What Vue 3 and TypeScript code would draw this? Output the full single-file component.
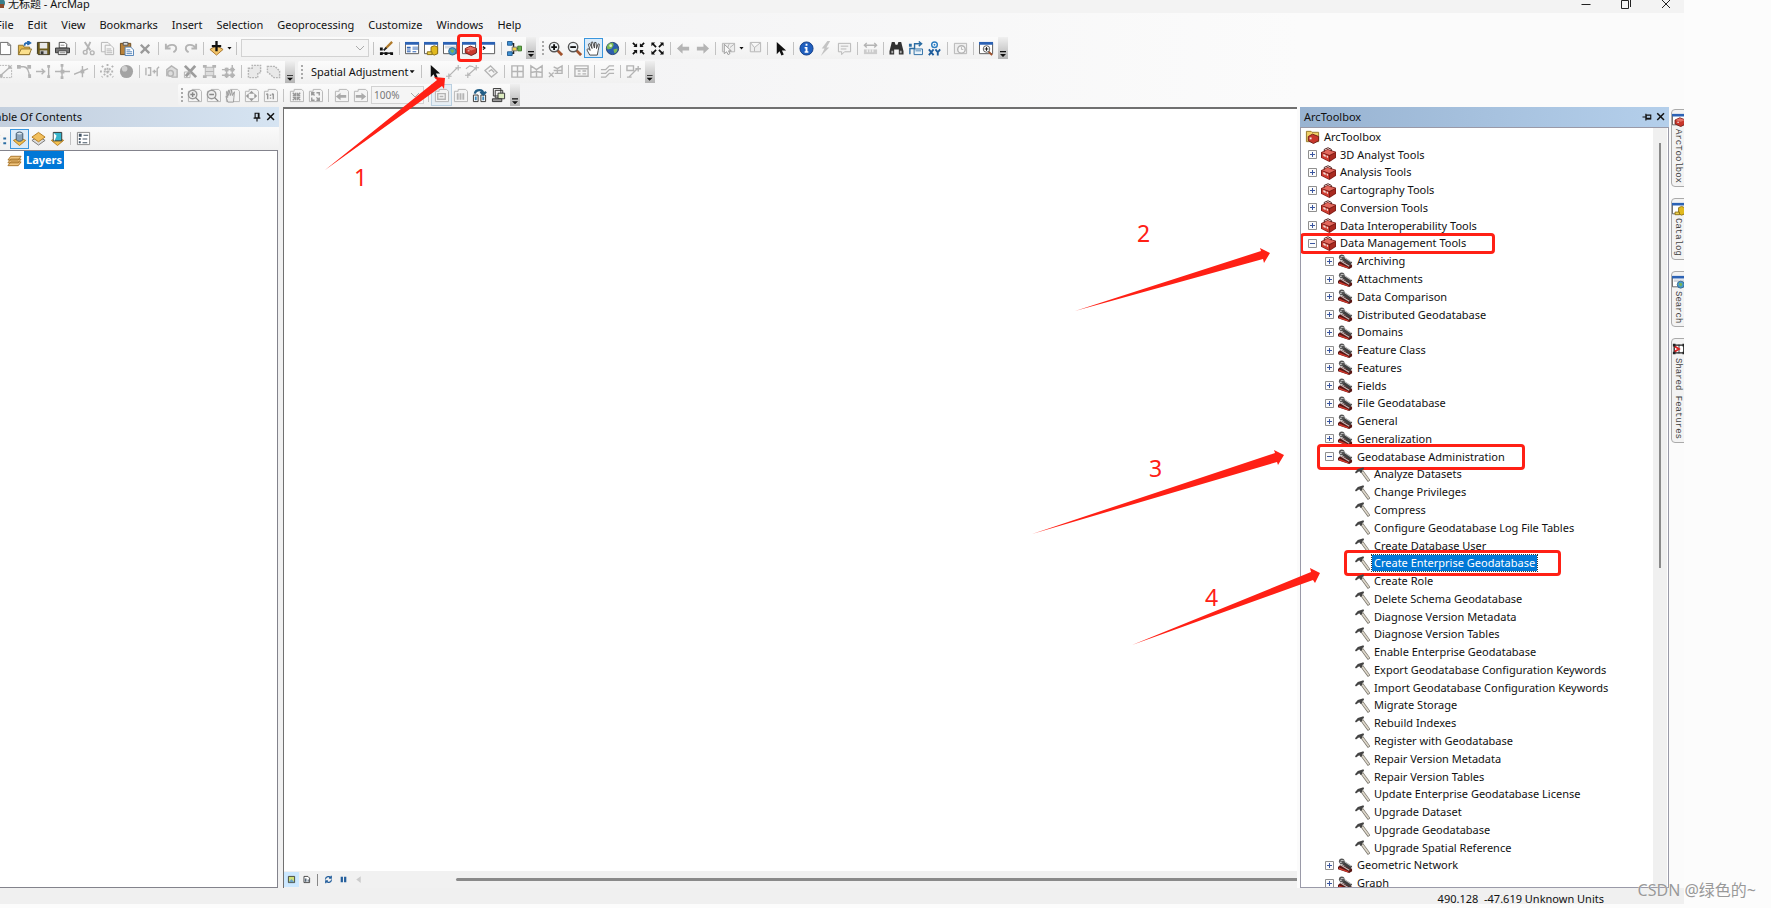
<script setup lang="ts">
import { ref } from 'vue'

interface Item {
  kind: 'icon' | 'sep' | 'caret' | 'more' | 'grip'
  name: string
  on: boolean
}
interface Row {
  level: number
  icon: string
  label: string
  open?: boolean
  mark?: string
}

const menus = ['File', 'Edit', 'View', 'Bookmarks', 'Insert', 'Selection', 'Geoprocessing', 'Customize', 'Windows', 'Help']

const G = '#b4b4b4'
const win = '<path fill="#fff" stroke="#555" d="M.5 2.5h14v11H.5z"/><path fill="#2c62b4" d="M0 1h15v3H0z"/>'
const page = `<path fill="#f4f4f4" stroke="${G}" d="M1.5 3.5h4v-2h8l2 2v11h-14z"/>`
const box = '<path fill="#7d1d17" d="M0 5.500 7 2l9 3v6.500L9 16 0 11.500z"/><path fill="#cf3d31" d="m1 6.500 7.500 3V15L1 11.200z"/><path fill="#a82a20" d="m9.500 9.500 5.700-3V11L9.500 14.700z"/><path fill="#e2685c" d="M1 5.500 7 2.800l8 2.700-6 3z"/><path fill="none" stroke="#4b1512" d="M3.500 5V2.500L7.500.8 11 2.500v2"/><path fill="#f0ded8" d="M2.500 7.500 5 8.600v2L2.500 9.500zM6 9l1.500.700v2L6 11z"/>'
const zoomGlass = (s: string) => `<path stroke="#a0522d" stroke-width="3" d="m10 10 5 5"/><circle cx="6.500" cy="6.500" r="5" fill="#eef3f6" stroke="#555" stroke-width="1.500"/><path stroke="#111" stroke-width="2" d="${s}"/>`

const icons: Record<string, string> = {
  newdoc: '<path fill="#fff" stroke="#666" d="M2.500 1.500h8l3 3v10h-11z"/><path fill="none" stroke="#666" d="M10.500 1.500v3h3"/>',
  open: '<path fill="#e3b84a" stroke="#8f722d" d="M1.500 14.500V4.500h5l1 2h6v8z"/><path fill="#fbe08d" stroke="#8f722d" d="m1.500 14.500 3-6h11l-2.500 6z"/><path fill="none" stroke="#2368b0" stroke-width="2" d="M8 5c0-3 2-3 5-3m-2-2 3 2-3 2"/>',
  save: '<path fill="#6b5a1c" stroke="#3b3420" d="M1.500 1.500h13v13h-12l-1-1z"/><path fill="#e9e9e9" d="M4 2h8v6H4z"/><path fill="#c9c9c9" d="M4 10h8v4H4z"/><path fill="#333" d="M5 11h3v3H5z"/>',
  print: '<path fill="#fff" stroke="#444" d="M4.500 1.500h6l2 2v4h-8z"/><path fill="#777" stroke="#333" d="M.5 7.500h15v5H.5z"/><path fill="#f3f3f3" stroke="#444" d="M3.500 10.500h9v4h-9z"/><path stroke="#888" d="M6 4.500h4M5 12.500h6"/>',
  cut: `<path stroke="${G}" stroke-width="2" d="m4 1 6 9M10 1 6 10"/><circle cx="4.500" cy="12" r="2" fill="none" stroke="${G}" stroke-width="1.500"/><circle cx="12" cy="12.500" r="2" fill="none" stroke="${G}" stroke-width="1.500"/>`,
  copy: `<path fill="#f6f6f6" stroke="${G}" d="M1.500 1.500h7l2 2v8h-9z"/><path fill="#f6f6f6" stroke="${G}" d="M5.500 4.500h6l3 3v7h-9z"/><path stroke="${G}" d="M7 8.500h5M7 10.500h6M7 12.500h6"/>`,
  paste: '<path fill="#b98239" stroke="#6b4a1c" d="M1.500 2.500h11v12h-11z"/><path fill="#ddd" stroke="#555" d="M4.500 1.500h5v3h-5z"/><path fill="#fff" stroke="#4e7fb5" d="M6.500 6.500h6l3 3v6h-9z"/><path stroke="#4e7fb5" d="M8 9.500h4M8 11.500h6M8 13.500h6"/>',
  del: '<path stroke="#9a9a9a" stroke-width="2.500" d="m3 4 9 9m0-9-9 9"/>',
  undo: `<path fill="none" stroke="${G}" stroke-width="2" d="M2 3v5h5M2.500 7.500C5 3 13 3 13 8c0 2-1 3-3 4"/>`,
  redo: `<path fill="none" stroke="${G}" stroke-width="2" d="M14 3v5H9M13.500 7.500C11 3 3 3 3 8c0 2 1 3 3 4"/>`,
  add: '<path fill="#f2c46a" stroke="#a8742a" d="m1 9 7-4 7 4-7 6z"/><path stroke="#111" stroke-width="2.500" d="M8 0v11M3 5.500h10"/>',
  edit: '<path stroke="#111" stroke-width="1.500" d="M2 13h11"/><path fill="#111" d="M1 7h3v3H1zM1 12h3v3H1zM6 12h3v3H6zM12 12h3v3h-3z"/><path stroke="#b07a2a" stroke-width="2.500" d="m7 8 7-7"/><path stroke="#222" stroke-width="2" d="m5 10 3-3"/>',
  table: win + '<path fill="#2c62b4" d="M2 6h4v2H2zM2 9h4v1H2zM2 11h4v1H2zM8 6h6v1H8zM8 8h6v1H8zM8 11h4v1H8z"/>',
  catalog: win + '<path fill="#e1b91e" stroke="#8a6d10" d="M7.500 6.500 11 5l3.500 1.500v7L11 15l-3.500-1.500z"/><path fill="#ecd04c" stroke="#8a6d10" d="M3.500 11.500h5v3h-5z"/>',
  search: win + '<path fill="#d5d9df" d="M2 5h12v3H2z"/><circle cx="10" cy="11" r="4" fill="#4698cf" stroke="#386a8c"/><path fill="#77b255" d="M8 9h3l1 2-2 2-2-2z"/>',
  toolbox: win + '<path fill="#c8372c" stroke="#6f1b16" d="M3.500 8 9 5.500 15.500 8v4.500L10 15.500 3.500 12.500z"/><path fill="#e57468" d="m4 8 5-2 6 2.200-5 1.800z"/><path fill="#eee" d="M6 10h2v1H6z"/>',
  python: win + '<path fill="none" stroke="#111" stroke-width="1.500" d="m2 6 2 1.500L2 9"/>',
  model: '<path fill="none" stroke="#222" stroke-width="1.500" d="M4 3h3v10H4M7 8h5"/><path fill="#3f8fd2" stroke="#235e92" d="M.5.500h5v4h-5zM.5 11.500h5v4h-5z"/><path fill="#f0d04c" stroke="#777" d="M5.500 6.500h5v4h-5z"/><path fill="#68b04c" stroke="#3d7727" d="M11.500 5.500h4v5h-4z"/>',
  zin: zoomGlass('M3.500 6.500h6M6.500 3.500v6'),
  zout: zoomGlass('M3.500 6.500h6'),
  hand: '<path fill="#fff" stroke="#444" d="M4 15 1 9.500 2 8l2.500 2L2.500 3.500l1.500-.8L6.500 8 5.500 1.500 7 1l2 6.500.2-6 1.500.1.500 6.400L13 3l1.300.5L13 10l-1 5z"/>',
  globe: '<circle cx="8" cy="8" r="6.500" fill="#2c5fae" stroke="#20406e"/><path fill="#7cba52" d="M4 3c3-2 6-1 5 2L7 8 3 9C1 7 2 5 4 3zM9 9l4-1c1 2-1 5-3 5z"/><circle cx="6" cy="5" r="1.500" fill="#dff0d0"/>',
  fin: '<path stroke="#111" stroke-width="1.800" d="m2 2 4 4M14 2l-4 4M2 14l4-4M14 14l-4-4"/><path fill="#111" d="M6.500 2.500v4h-4zM9.500 2.500v4h4zM6.500 13.500v-4h-4zM9.500 13.500v-4h4z"/>',
  fout: '<path stroke="#111" stroke-width="1.800" d="m2.500 2.500 4 4M13.500 2.500l-4 4M2.500 13.500l4-4M13.500 13.500l-4-4"/><path fill="#111" d="M1.500 1.500h4l-4 4zM14.500 1.500h-4l4 4zM1.500 14.500h4l-4-4zM14.500 14.500h-4l4-4z"/>',
  left: '<path fill="#b4b4b4" d="m1 8 6-5.500V6h7v4H7v3.500z"/>',
  right: '<path fill="#b4b4b4" d="M15 8 9 2.500V6H2v4h7v3.500z"/>',
  selfeat: `<path fill="#eee" stroke="${G}" d="M1.500 2.500h13v9h-13zM9 2.500l-2 5 3 4M9.500 7l5-4"/><path fill="#f8f8f8" stroke="#999" d="M3.500 3.500v10l2.500-2 1.500 3 2-1-1.500-3h3z"/>`,
  clear: `<path fill="#eee" stroke="${G}" d="M3.500 1.500h11v10h-11zM4 2l4 5 6-5M8 7v4"/>`,
  arrow: '<path fill="#111" d="M4 1v13l3-3 2 4.500 2.500-1L9.500 10H14z"/>',
  info: '<circle cx="8" cy="8" r="7" fill="#1f5fbf" stroke="#153f86"/><path fill="#fff" d="M7 3h2v2H7zM6 6.500h3V11h1v1.500H6V11h1V8H6z"/>',
  bolt: '<path fill="#c4c4c4" d="M10 0 4 8h3l-4 8 9-9H9l4-7z"/>',
  html: `<path fill="#f3f3f3" stroke="${G}" d="M1.500 2.500h13v9H8l-3 3v-3H1.500z"/><path stroke="${G}" d="M4 5.500h8M4 8.500h6"/>`,
  measure: `<path fill="none" stroke="${G}" stroke-width="1.500" d="M1 4.500h14M4 2 1.500 4.500 4 7M12 2l2.500 2.500L12 7"/><path fill="#ccc" d="M1 9h14v5H1z"/><path stroke="#fff" d="M4.500 9v3M7.500 9v3M10.500 9v3"/>`,
  binoc: '<path fill="#333" d="M3 1h3l1 3h2l1-3h3l2.500 10v3.500h-5V9h-5v5.500h-5V11z"/><path fill="#aaa" d="M2.500 10.500h2V13h-2zM11.500 10.500h2V13h-2z"/>',
  route: '<path fill="none" stroke="#2b6da3" stroke-width="1.500" d="M2 14V8h5V3h7M11.500.5 14.500 3l-3 2.500"/><path fill="#eaf3fa" stroke="#2b6da3" d="M6.500 8.500h9v6h-9z"/><path fill="#2b6da3" d="M1 3h3v3H1zM8 10h6v1H8z"/>',
  xy: '<circle cx="8" cy="4" r="3" fill="#fff" stroke="#2b7cc0" stroke-width="1.500"/><circle cx="8" cy="4" r="1" fill="#2b7cc0"/><path fill="none" stroke="#1f5d9c" stroke-width="2" d="m2 9 5 6M7 9l-5 6M9 9l2.500 3L14 9M11.500 12v3.500"/>',
  time: `<path fill="#eee" stroke="${G}" d="M1.500 2.500h13v11h-13z"/><circle cx="9" cy="9" r="4" fill="#f8f8f8" stroke="${G}" stroke-width="1.500"/><path fill="none" stroke="${G}" d="M9 6.500V9h2"/>`,
  viewer: win + '<path stroke="#a0522d" stroke-width="2" d="m10 11 4 4"/><circle cx="8" cy="8.500" r="3.500" fill="#fff" stroke="#555"/><path stroke="#111" d="M6 8.500h4M8 6.500v4"/>',
  e1: `<path fill="none" stroke="${G}" stroke-dasharray="2 1" d="M1.500 1.500h13v13h-13z"/><path stroke="${G}" stroke-width="1.500" d="m3 12 9-8"/><path fill="${G}" d="M2 11h3v3H2zM11 2h3v3h-3z"/>`,
  e2: `<path fill="none" stroke="${G}" stroke-width="1.500" d="M2 3h5c4 0 6 5 6 10"/><path fill="${G}" d="M0 1h4v4H0zM11 1h4v4h-4zM12 11h3v4h-3z"/>`,
  e3: `<path stroke="${G}" stroke-width="1.500" d="M0 8h10M6 5l3 3-3 3M13.500 1v14"/><path fill="${G}" d="M12 1h3v3h-3zM12 12h3v3h-3z"/>`,
  e4: `<path stroke="${G}" stroke-width="1.500" d="M0 8h16M7.500 0v16"/><path fill="${G}" d="M6 6h4v4H6zM6 0h3v3H6zM6 13h3v3H6z"/>`,
  e5: `<path stroke="${G}" stroke-width="1.500" d="m0 11 15-6M9 2v12"/><path fill="${G}" d="M7 6h4v4H7z"/>`,
  e6: `<path stroke="${G}" stroke-width="2" stroke-dasharray="2 2" d="m2 2 12 12M14 2 2 14M8 0v16M0 8h16"/>`,
  ball: '<circle cx="8" cy="8" r="7" fill="#a3a3a3"/><circle cx="6" cy="5" r="3" fill="#cfcfcf"/>',
  f1: `<path fill="none" stroke="${G}" stroke-width="1.500" d="M1 4v8M3 4h3v8H3M8 8h4M10 6v4M15 3l-2 2v8"/>`,
  f2: `<path fill="#ddd" stroke="${G}" stroke-width="1.500" d="M3 13V6l5-4 6 4v8H8"/><circle cx="7" cy="10" r="3" fill="none" stroke="${G}" stroke-width="1.500"/>`,
  f3: `<path stroke="#9c9c9c" stroke-width="3" d="m2 2 12 12M13 2 3 13"/><path fill="none" stroke="${G}" d="M1.500 8.500h6v6h-6z"/>`,
  f4: `<path fill="#ddd" stroke="${G}" d="M3.500 3.500h9v9h-9zM3.500 8h9"/><path fill="${G}" d="M1 1h4v3H1zM11 1h4v3h-4zM1 12h4v3H1zM11 12h4v3h-4z"/>`,
  f5: `<path stroke="${G}" stroke-width="1.500" d="M1 6h14M1 12h14M6 4v11M12 1v14"/><path fill="${G}" d="M4 4h4v4H4zM10 4h4v4h-4zM4 10h4v4H4zM10 10h4v4h-4z"/>`,
  g1: `<path fill="#e9e9e9" stroke="${G}" stroke-width="1.500" stroke-dasharray="2 1" d="M1.500 4.500h4v-3h9v8h-3v5h-10z"/>`,
  g2: `<path fill="#e9e9e9" stroke="${G}" stroke-width="1.500" stroke-dasharray="2 1" d="M1.500 2.500h8l5 5v7h-6l-7-6z"/>`,
  s1: `<path stroke="${G}" stroke-width="1.200" d="m3 13 9-9M10 4h6M13 1v6M0 13h6M3 10v6"/>`,
  s2: `<path fill="none" stroke="${G}" stroke-width="1.200" d="m3 12 9-8M1 5l4-3 4 1M9 4h6M12 1v6M0 12h6M3 9v6"/>`,
  s3: `<path fill="none" stroke="${G}" stroke-width="1.500" d="m1 7 6-5 7 7-6 5zM5 8l3-2 3 3"/>`,
  s4: `<path fill="none" stroke="${G}" stroke-width="1.500" d="M2 2h12v12H2zM8 2v12M2 8h12"/>`,
  s5: `<path fill="none" stroke="${G}" stroke-width="1.500" d="M2 2l6 4 6-4v12H2zM8 6v8M2 9l6-1 6 1"/>`,
  s6: `<path fill="none" stroke="${G}" stroke-width="1.500" d="M6 3l4 2 5-3v8H7M10 5v5M6 7h9M1 9l5 5M6 9l-5 5"/>`,
  s7: `<path fill="none" stroke="${G}" stroke-width="1.500" d="M1 2h14v11H1zM1 5h14M4 7.500h3M9 7.500h4M4 10.500h3M9 10.500h4"/>`,
  s8: `<path fill="none" stroke="${G}" stroke-width="1.500" d="M1 6h5l4-4h5M1 10h5l4-4h5M1 14h5l4-4h5"/>`,
  s9: `<path fill="none" stroke="${G}" stroke-width="1.500" d="M1 2h7v5H1zM3 14l9-9M10 5h6M13 2v6M1 14h5"/>`,
  p1: page + '<circle cx="6" cy="7" r="4.500" fill="#eee" stroke="#999" stroke-width="1.500"/><path stroke="#888" stroke-width="1.500" d="M3.500 7h5M6 4.500v5M9 10l4 4"/>',
  p2: page + '<circle cx="6" cy="7" r="4.500" fill="#eee" stroke="#999" stroke-width="1.500"/><path stroke="#888" stroke-width="1.500" d="M3.500 7h5M9 10l4 4"/>',
  p3: page + '<path fill="#eee" stroke="#999" d="M3 15 1 9l2 1-1-6 2 4 0-6 2 6 1-6 1 6 2-4-.5 6L9 15z"/>',
  p4: page + '<path fill="#999" d="m8 3 3 3H5zM8 14l3-3H5zM2 8.500l3-3v6zM14 8.500l-3-3v6z"/>',
  p5: page + '<path stroke="#999" stroke-width="1.500" d="M5 6v6M11 6v6M8 7v1.500M8 10v1.500M3.500 7 5 6M9.500 7 11 6"/>',
  p6: page + '<path stroke="#999" stroke-width="1.500" d="m4 5 3 3M12 5 9 8M4 13l3-3M12 13l-3-3M4 8h3V5M9 5v3h3M4 10h3v3M12 10H9v3"/>',
  p7: page + '<path fill="none" stroke="#999" stroke-width="1.500" d="M4 8V5h3M9 5h3v3M4 10v3h3M12 10v3H9M4 5l3 3M12 13l-3-3"/>',
  p8: page + '<path fill="#aaa" d="m2 9 5-4v2.500h6v3H7V13z"/>',
  p9: page + '<path fill="#aaa" d="M14 9 9 5v2.500H3v3h6V13z"/>',
  q1: page + `<path fill="none" stroke="${G}" stroke-width="1.500" d="M4 6h8v6H4zM6 9h4"/>`,
  q2: page + `<path stroke="${G}" stroke-width="7" stroke-dasharray="2 1" d="M4 9h9"/>`,
  q3: '<path fill="#fff" stroke="#333" d="M1.500 7.500h5v7h-5zM9.500 7.500h5v7h-5z"/><path fill="#3c89bb" d="M3 9h2v4H3zM11 9h2v4h-2z"/><path fill="none" stroke="#235e86" stroke-width="2.500" d="M3 6c1-5 9-5 9 0M9 4l3 3 3-3"/>',
  q4: '<path fill="#eee" stroke="#333" d="M2.500.500h8v8h-8zM4.500 2.500h8v8h-8z"/><path fill="#dcebc0" stroke="#333" d="M7.500 5.500h7v6h-7z"/><path fill="#999" stroke="#333" d="M1.500 11.500h10v3h-10z"/>',
  pin: '<path fill="none" stroke="#111" stroke-width="1.500" d="M5.500 3h5v6h-5zM3.500 9.500h9M8 10v4"/><path fill="#111" d="M9 3h2v6H9z"/>',
  pinside: '<path fill="none" stroke="#111" stroke-width="1.500" d="M7 5.500h6v5H7zM6.500 3.500v9M6 8H2"/><path fill="#111" d="M7 9h6v2H7z"/>',
  x: '<path stroke="#111" stroke-width="2" d="m3 3 9 9M12 3l-9 9"/>',
  source: '<path fill="#f2c04e" stroke="#b27b20" d="m1.500 10 6.500-3 6.500 3L8 15.500z"/><path fill="#8ba3b8" stroke="#43586b" d="M4.500 2.500c2-2 5-2 7 0v7c-2 2-5 2-7 0z"/><path fill="#dfe9f2" d="M5 3c2-1.500 4-1.500 6 0-2 1-4 1-6 0z"/>',
  layers2: '<path fill="#ddd" stroke="#777" d="m1 10 7 5 7-5-7-4z"/><path fill="#f2bf5c" stroke="#b27b20" d="m1 6.500 7-5 7 5-7 5z"/>',
  sel: '<path fill="#f2c04e" stroke="#b27b20" d="m1.500 10 6.500-3 6.500 3L8 15.500z"/><path fill="#37b5cc" stroke="#333" d="M3.500 1.500h9v9h-9z"/><path fill="#fff" d="m4 2 3 3-2 5H4z"/>',
  opts: '<path fill="#fff" stroke="#888" d="M1.500 1.500h13v13h-13z"/><path fill="#456" d="M3 3h3v3H3zM3 7.500h2v2H3zM3 11h2v2H3zM8 4h5v1H8zM7 8h5v1H7zM7 12h5v1H7z"/>',
  stack: '<path fill="#f1c57e" stroke="#a8742a" d="m1 13.500 3-4h11l-3 4zM1 10.500l3-4h11l-3 4zM1 7.500l3-4h11l-3 4z"/>',
  root: '<path fill="#f0cf68" stroke="#93772b" d="M1.500 13.500v-11h5l1 1h7v10z"/><path fill="#c8372c" stroke="#6f1b16" d="M3.500 8 8 5.500 14.500 8v4.500L9 15.500 3.500 12.500z"/><path fill="#eee" d="M5 9h2v2H5z"/>',
  box,
  set: '<path fill="#5a1613" d="M0 9.500 3 7l12 4.500V14l-3 2L0 12z"/><path fill="#d0392d" d="m1 10 10 4v1.500L1 12z"/><path stroke="#3f3f3f" stroke-width="4" d="m3 3.500 11 7"/><path stroke="#bdbdbd" stroke-width="1.200" d="m2 7 10 6M5 2.500l9 6"/><circle cx="4" cy="3.500" r="3" fill="#555"/><path fill="#ddd" d="M3 2h3v1H3zM2 4h2v1H2z"/>',
  hammer: '<path stroke="#77736a" stroke-width="3.200" d="m7 4 8 11"/><path stroke="#dfd9cc" stroke-width="1.800" d="m7 4 7.700 10.500"/><path fill="#444" d="M0 5.500 3 2l6-1.800.7 1.800L7.500 3.500 8 5 6 6.500 4.500 4.500 1 7z"/>',
  shared: '<path fill="#fff" stroke="#222" stroke-width="1.500" d="M2.500 3.500h11v9h-11z"/><path fill="none" stroke="#222" d="M8 3v10"/><path stroke="#d22" stroke-width="2" d="m3 5 5 3-5 3"/><path fill="#222" d="M1 2h3v3H1zM12 2h3v3h-3zM1 11h3v3H1zM12 11h3v3h-3z"/>',
  mapview: '<path fill="#cfe07a" stroke="#333" stroke-width="1.500" d="M2.500 2.500h11v11h-11z"/><path fill="#6aa0c8" d="m3 13 5-6 5 6z"/>',
  layview: '<path fill="#fff" stroke="#333" stroke-width="1.500" d="M3.500 2.500h7l3 3v8h-10z"/><path fill="#567" d="M5 6h3v6H5zM10 8h2v4h-2z"/>',
  refresh: '<path fill="none" stroke="#235e9c" stroke-width="2" d="M2.500 8C3 2 10 1.500 12.500 5M13.500 8C13 14 6 14.500 3.500 11M13 1.500v4H9M3 14.500v-4h4"/>',
  pause: '<path fill="#235e9c" d="M3 3h4v10H3zM9 3h4v10H9z"/>',
  back: '<path fill="#ccc" d="M12 2v12L4 8z"/>',
}

// Tokens: "|" separator, "v" drop arrow, "#" overflow handle, ":" grip, "*" prefix for a pressed button
const parse = (text: string): Item[] =>
  text.split(' ').map((t) => {
    const kinds: Record<string, Item['kind']> = { '|': 'sep', v: 'caret', '#': 'more', ':': 'grip' }
    return { kind: kinds[t] ?? 'icon', name: t.replace('*', ''), on: t.startsWith('*') }
  })

const strips = {
  file: parse('newdoc open save print | cut copy paste del | undo redo | add v |'),
  windows: parse('| edit | table catalog search toolbox python | model #'),
  tools: parse(': zin zout *hand globe | fin fout | left right | selfeat v clear | arrow | info bolt html | measure | binoc route xy | time | viewer #'),
  editing: parse('e1 e2 e3 e4 e5 | e6 ball | f1 f2 f3 f4 f5 | g1 g2 #'),
  adjust: parse('| arrow s1 s2 s3 | s4 s5 s6 | s7 | s8 | s9 #'),
  layout: parse(': p1 p2 p3 p4 p5 | p6 p7 | p8 p9'),
  layout2: parse('*q1 q2 q3 q4 #'),
}

const sets = (names: string[], level: number, icon: string): Row[] =>
  names.map((label) => ({ level, icon, label, open: icon === 'hammer' ? undefined : false }))

const rows: Row[] = [
  { level: 0, icon: 'root', label: 'ArcToolbox' },
  ...sets(['3D Analyst Tools', 'Analysis Tools', 'Cartography Tools', 'Conversion Tools', 'Data Interoperability Tools'], 1, 'box'),
  { level: 1, icon: 'box', label: 'Data Management Tools', open: true, mark: 'mark-a' },
  ...sets(['Archiving', 'Attachments', 'Data Comparison', 'Distributed Geodatabase', 'Domains', 'Feature Class', 'Features', 'Fields', 'File Geodatabase', 'General', 'Generalization'], 2, 'set'),
  { level: 2, icon: 'set', label: 'Geodatabase Administration', open: true, mark: 'mark-b' },
  ...sets(['Analyze Datasets', 'Change Privileges', 'Compress', 'Configure Geodatabase Log File Tables', 'Create Database User'], 3, 'hammer'),
  { level: 3, icon: 'hammer', label: 'Create Enterprise Geodatabase', mark: 'mark-c' },
  ...sets(['Create Role', 'Delete Schema Geodatabase', 'Diagnose Version Metadata', 'Diagnose Version Tables', 'Enable Enterprise Geodatabase', 'Export Geodatabase Configuration Keywords', 'Import Geodatabase Configuration Keywords', 'Migrate Storage', 'Rebuild Indexes', 'Register with Geodatabase', 'Repair Version Metadata', 'Repair Version Tables', 'Update Enterprise Geodatabase License', 'Upgrade Dataset', 'Upgrade Geodatabase', 'Upgrade Spatial Reference'], 3, 'hammer'),
  ...sets(['Geometric Network', 'Graph'], 2, 'set'),
]

const selected = ref('Create Enterprise Geodatabase')
const scale = ref('100%')

const sideTabs = [
  { icon: 'toolbox', label: 'ArcToolbox' },
  { icon: 'catalog', label: 'Catalog' },
  { icon: 'search', label: 'Search' },
  { icon: 'shared', label: 'Shared Features' },
]
</script>

<template>
  <div class="screen">
    <div class="window">
      <header class="title">
        <svg class="logo" viewBox="0 0 8 8"><circle cx="1" cy="3" r="4" fill="#3a7f8c" /><path fill="#8c4a2a" d="M0 4h4v4H0z" /></svg>
        <span class="name">无标题 - ArcMap</span>
        <div class="controls">
          <button aria-label="Minimize"><svg viewBox="0 0 12 12"><path stroke="#222" d="M1.500 6.500h9" /></svg></button>
          <button aria-label="Restore"><svg viewBox="0 0 12 12"><path fill="none" stroke="#222" d="M1.500 2.500h7v8h-7zM4 .5h6.500V9" /></svg></button>
          <button aria-label="Close"><svg viewBox="0 0 12 12"><path stroke="#222" d="m2 2 8 8m0-8-8 8" /></svg></button>
        </div>
      </header>

      <nav class="menu">
        <button v-for="m in menus" :key="m">{{ m }}</button>
      </nav>

      <div class="bars">
        <div class="bar">
          <div class="strip">
            <template v-for="(t, i) in strips.file" :key="i">
              <button v-if="t.kind === 'icon'" class="tool" :aria-label="t.name"><svg viewBox="0 0 16 16" v-html="icons[t.name]" /></button>
              <i v-else :class="t.kind" />
            </template>
            <select class="combo wide" aria-label="Map scale"><option></option></select>
            <template v-for="(t, i) in strips.windows" :key="i">
              <button v-if="t.kind === 'icon'" class="tool" :class="{ circled: t.name === 'toolbox' }" :aria-label="t.name"><svg viewBox="0 0 16 16" v-html="icons[t.name]" /></button>
              <i v-else :class="t.kind" />
            </template>
          </div>
          <div class="strip">
            <template v-for="(t, i) in strips.tools" :key="i">
              <button v-if="t.kind === 'icon'" class="tool" :class="{ on: t.on }" :aria-label="t.name"><svg viewBox="0 0 16 16" v-html="icons[t.name]" /></button>
              <i v-else :class="t.kind" />
            </template>
          </div>
        </div>
        <div class="bar">
          <div class="strip">
            <template v-for="(t, i) in strips.editing" :key="i">
              <button v-if="t.kind === 'icon'" class="tool" :aria-label="t.name"><svg viewBox="0 0 16 16" v-html="icons[t.name]" /></button>
              <i v-else :class="t.kind" />
            </template>
          </div>
          <div class="strip">
            <i class="grip" />
            <button class="drop">Spatial Adjustment<i class="caret" /></button>
            <template v-for="(t, i) in strips.adjust" :key="i">
              <button v-if="t.kind === 'icon'" class="tool" :aria-label="t.name"><svg viewBox="0 0 16 16" v-html="icons[t.name]" /></button>
              <i v-else :class="t.kind" />
            </template>
          </div>
        </div>
        <div class="bar inset">
          <div class="strip">
            <template v-for="(t, i) in strips.layout" :key="i">
              <button v-if="t.kind === 'icon'" class="tool" :aria-label="t.name"><svg viewBox="0 0 16 16" v-html="icons[t.name]" /></button>
              <i v-else :class="t.kind" />
            </template>
            <select v-model="scale" class="combo zoom" aria-label="Zoom percent"><option>100%</option></select>
            <i class="sep" />
            <template v-for="(t, i) in strips.layout2" :key="i">
              <button v-if="t.kind === 'icon'" class="tool" :class="{ soft: t.on }" :aria-label="t.name"><svg viewBox="0 0 16 16" v-html="icons[t.name]" /></button>
              <i v-else :class="t.kind" />
            </template>
          </div>
        </div>
      </div>

      <main class="work">
        <section class="toc">
          <div class="head">
            <h2>Table Of Contents</h2>
            <button aria-label="Pin"><svg viewBox="0 0 16 16" v-html="icons.pin" /></button>
            <button aria-label="Close"><svg viewBox="0 0 16 16" v-html="icons.x" /></button>
          </div>
          <div class="tocbar">
            <button class="tool first" aria-label="List by drawing order"><svg viewBox="0 0 16 16"><path fill="#e5a94b" d="m3 2 5 3-5 3zM3 9l5 3-5 3z" /><path fill="#2b6da3" d="M11 7h3v2h-3zM11 12h3v2h-3z" /></svg></button>
            <button class="tool on" aria-label="List by source"><svg viewBox="0 0 16 16" v-html="icons.source" /></button>
            <button class="tool" aria-label="List by visibility"><svg viewBox="0 0 16 16" v-html="icons.layers2" /></button>
            <button class="tool" aria-label="List by selection"><svg viewBox="0 0 16 16" v-html="icons.sel" /></button>
            <i class="sep" />
            <button class="tool" aria-label="Options"><svg viewBox="0 0 16 16" v-html="icons.opts" /></button>
          </div>
          <div class="toclist">
            <div class="layer"><svg viewBox="0 0 16 16" v-html="icons.stack" /><button>Layers</button></div>
          </div>
        </section>

        <section class="map">
          <div class="canvas" />
          <div class="mapbar">
            <button class="small active" aria-label="Data view"><svg viewBox="0 0 16 16" v-html="icons.mapview" /></button>
            <button class="small" aria-label="Layout view"><svg viewBox="0 0 16 16" v-html="icons.layview" /></button>
            <i class="line" />
            <button class="small" aria-label="Refresh"><svg viewBox="0 0 16 16" v-html="icons.refresh" /></button>
            <button class="small" aria-label="Pause drawing"><svg viewBox="0 0 16 16" v-html="icons.pause" /></button>
            <button class="small" aria-label="Scroll left"><svg viewBox="0 0 16 16" v-html="icons.back" /></button>
            <div class="thumb" />
          </div>
        </section>

        <section class="toolbox">
          <div class="head">
            <h2>ArcToolbox</h2>
            <button aria-label="Pin"><svg viewBox="0 0 16 16" v-html="icons.pinside" /></button>
            <button aria-label="Close"><svg viewBox="0 0 16 16" v-html="icons.x" /></button>
          </div>
          <div class="body">
            <ul class="tree">
              <li v-for="r in rows" :key="r.label" :class="['row', 'lvl' + r.level, r.mark]">
                <button v-if="r.open !== undefined" class="exp" :aria-label="(r.open ? 'Collapse ' : 'Expand ') + r.label">
                  <svg viewBox="0 0 9 9"><path fill="#fbfbfb" stroke="#8f8f8f" d="M.5.5h8v8h-8z" /><path stroke="#3a56a0" :d="r.open ? 'M2 4.500h5' : 'M2 4.500h5M4.500 2v5'" /></svg>
                </button>
                <svg class="ico" viewBox="0 0 16 16" v-html="icons[r.icon]" />
                <button class="label" :class="{ picked: selected === r.label }" @click="selected = r.label">{{ r.label }}</button>
              </li>
            </ul>
            <div class="track"><div class="vthumb" /></div>
          </div>
        </section>

        <aside class="side">
          <button v-for="t in sideTabs" :key="t.label" class="tab"><svg viewBox="0 0 16 16" v-html="icons[t.icon]" />{{ t.label }}</button>
        </aside>
      </main>

      <footer class="status"><span>490.128&nbsp; -47.619 Unknown Units</span></footer>
    </div>

    <svg class="notes" width="1771" height="908" viewBox="0 0 1771 908">
      <path d="M325 170 437 80 434 77 445 78 444 89 442 86zM1075 311 1261 251 1260 248 1270 253 1264 263 1263 259zM1032 534 1275 453 1274 450 1284 455 1278 465 1277 462zM1132 645 1311 572 1310 568 1320 573 1315 583 1313 580z" />
      <text x="354" y="186">1</text>
      <text x="1137" y="242">2</text>
      <text x="1149" y="477">3</text>
      <text x="1205" y="606">4</text>
    </svg>
    <div class="watermark">CSDN @绿色的~</div>
  </div>
</template>

<style>
body {
  margin: 0;
  background: #fcfcfc;
}
</style>

<style scoped>
.screen {
  position: relative;
  height: 100vh;
  box-sizing: border-box;
  padding: 0 87px 4px 0;
  overflow: hidden;
  font: 11px/16px "Noto Sans", "Noto Sans CJK SC", sans-serif;
  color: #111;
}
button {
  margin: 0;
  padding: 0;
  border: 0;
  background: none;
  font: inherit;
  color: inherit;
}
svg {
  display: block;
  fill: none;
}
.window {
  display: flex;
  flex-direction: column;
  height: 100%;
  overflow: hidden;
  background: linear-gradient(90deg, #f0f0f0 200px, #f4f4f5 600px, #fbfbfb 1300px);
}
.title {
  display: flex;
  align-items: flex-start;
  height: 13px;
  background: #f3f3f3;
  line-height: 7px;
}
.logo {
  width: 8px;
  height: 8px;
}
.controls {
  display: flex;
  gap: 28px;
  margin-left: auto;
  padding-right: 12px;
}
.controls button,
.controls svg {
  width: 12px;
  height: 12px;
}
.controls svg {
  margin-top: -4px;
}
.menu {
  display: flex;
  gap: 14px;
  height: 24px;
  margin-left: -4px;
}
.bars {
  display: flex;
  flex-direction: column;
  gap: 1px;
  height: 70px;
}
.bar {
  display: flex;
  gap: 3px;
  height: 23px;
}
.inset {
  padding-left: 178px;
}
.strip {
  display: flex;
  align-items: center;
  height: 22px;
  background: linear-gradient(#fbfbfb, #f1f1f1);
  border-radius: 2px;
}
.bar .strip:first-child:not(:only-child) {
  margin-left: -4px;
}
.tool {
  display: flex;
  flex: none;
  align-items: center;
  justify-content: center;
  width: 19px;
  height: 20px;
}
.tool svg {
  width: 15px;
  height: 15px;
}
.on {
  background: #dcebf8;
  outline: 1px solid #3a96dd;
  outline-offset: -1px;
}
.soft {
  background: #e6eef4;
  outline: 1px solid #b9cfe0;
}
.circled {
  position: relative;
}
.circled::after {
  content: "";
  position: absolute;
  inset: -4px -3px;
  border: 3px solid #ff2015;
  border-radius: 4px;
}
.sep {
  flex: none;
  width: 1px;
  height: 13px;
  margin: 0 3px;
  background: #c2c2c2;
}
.caret {
  flex: none;
  width: 5px;
  height: 3px;
  margin: 0 1px;
  background: #111;
  clip-path: polygon(0 0, 100% 0, 50% 100%);
}
.grip {
  flex: none;
  width: 2px;
  height: 14px;
  margin: 0 2px 0 3px;
  background: repeating-linear-gradient(#aaa 0 2px, transparent 2px 4px);
}
.more {
  position: relative;
  flex: none;
  align-self: stretch;
  width: 10px;
  margin-left: 2px;
  background: linear-gradient(#f0f0f0, #b4b4b4);
}
.more::after {
  content: "";
  position: absolute;
  left: 2px;
  bottom: 2px;
  width: 6px;
  height: 6px;
  background: #111;
  clip-path: polygon(0 0, 100% 0, 100% 20%, 0 20%, 0 50%, 100% 50%, 50% 100%, 0 50%);
}
.combo {
  appearance: none;
  flex: none;
  box-sizing: border-box;
  height: 18px;
  margin: 0 1px;
  padding: 0 2px;
  border: 1px solid #d2d2d2;
  border-radius: 0;
  background: #f5f5f5 url("data:image/svg+xml,%3Csvg xmlns='http://www.w3.org/2000/svg' width='16' height='16'%3E%3Cpath fill='none' stroke='%23aaa' d='m4 6 4 4 4-4'/%3E%3C/svg%3E") no-repeat right center;
  font: 10px/14px "Noto Sans", sans-serif;
  color: #777;
}
.wide {
  width: 128px;
}
.zoom {
  width: 53px;
}
.drop {
  display: flex;
  align-items: center;
  padding: 0 2px 0 6px;
}
.work {
  display: flex;
  flex: 1;
  min-height: 0;
}
.head {
  display: flex;
  align-items: center;
  height: 20px;
  gap: 2px;
  padding-right: 2px;
}
.head h2 {
  flex: 1;
  margin: 0;
  font: inherit;
  white-space: nowrap;
}
.head svg {
  width: 12px;
  height: 12px;
}
.toc {
  display: flex;
  flex-direction: column;
  width: 279px;
  box-sizing: border-box;
}
.toc .head {
  background: linear-gradient(90deg, #c3cfde, #d6e4f2);
}
.toc .head h2 {
  margin-left: -10px;
}
.tocbar {
  display: flex;
  align-items: center;
  height: 23px;
  background: linear-gradient(#fafafa, #f0f0f0);
}
.first {
  margin-left: -9px;
}
.toclist {
  flex: 1;
  margin-right: 1px;
  border: solid #83838c;
  border-width: 1px 1px 1px 0;
  background: #fff;
}
.layer {
  display: flex;
  align-items: center;
  gap: 2px;
  padding-left: 7px;
}
.layer svg {
  width: 15px;
  height: 15px;
}
.layer button {
  height: 18px;
  padding: 0 2px;
  background: #0078d7;
  color: #fff;
  font-weight: bold;
  line-height: 18px;
}
.map {
  display: flex;
  flex: 1;
  flex-direction: column;
  margin: 0 3px 0 4px;
}
.canvas {
  flex: 1;
  border: solid #707070;
  border-width: 2px 0 0 1px;
  background: #fff;
}
.mapbar {
  display: flex;
  align-items: center;
  height: 17px;
  border-left: 1px solid #707070;
  background: #f1f1f1;
}
.small {
  display: flex;
  align-items: center;
  justify-content: center;
  width: 15px;
  height: 15px;
}
.small svg {
  width: 9px;
  height: 9px;
}
.active {
  background: #cce8ff;
}
.line {
  width: 1px;
  height: 12px;
  margin: 0 3px;
  background: #888;
}
.thumb {
  flex: 1;
  height: 3px;
  margin-left: 90px;
  border-radius: 2px 0 0 2px;
  background: #8a8a8a;
}
.toolbox {
  display: flex;
  flex-direction: column;
  width: 369px;
}
.toolbox .head {
  padding-left: 4px;
  background: linear-gradient(90deg, #98b3d1, #b4cfeb);
}
.body {
  display: flex;
  flex: 1;
  min-height: 0;
  border: 1px solid #9a9aa8;
  background: #fff;
  overflow: hidden;
}
.tree {
  display: grid;
  flex: 1;
  grid-auto-rows: minmax(0, 1fr);
  height: calc(100% + 5px);
  margin: 0;
  padding: 0;
  list-style: none;
}
.row {
  position: relative;
  display: flex;
  align-items: center;
}
.lvl0,
.lvl1 {
  padding-left: 4px;
}
.lvl2 {
  padding-left: 21px;
}
.lvl3 {
  padding-left: 54px;
}
.exp {
  display: flex;
  flex: none;
  align-items: center;
  justify-content: center;
  width: 15px;
  height: 15px;
  margin-right: 1px;
}
.exp svg {
  width: 9px;
  height: 9px;
}
.ico {
  flex: none;
  width: 15px;
  height: 15px;
}
.label {
  margin-left: 2px;
  padding: 0 2px;
  white-space: nowrap;
}
.picked {
  background: #0078d7;
  color: #fff;
  outline: 1px dotted #333;
}
.mark-a::after,
.mark-b::after,
.mark-c::after {
  content: "";
  position: absolute;
  box-sizing: border-box;
  top: -4px;
  bottom: -4px;
  border: 3px solid #ff2015;
  border-radius: 4px;
}
.mark-a::after {
  top: -2px;
  bottom: -2px;
  left: -1px;
  width: 195px;
}
.mark-b::after {
  left: 16px;
  width: 208px;
}
.mark-c::after {
  left: 43px;
  width: 217px;
}
.track {
  width: 14px;
  margin-right: 1px;
  background: #f0f0f0;
}
.vthumb {
  width: 2px;
  height: 56%;
  margin: 15px auto 0;
  background: #8a8a8a;
}
.side {
  display: flex;
  flex-direction: column;
  align-items: flex-start;
  gap: 11px;
  width: 13px;
  padding: 2px 0 0 2px;
  overflow: hidden;
}
.tab {
  display: flex;
  flex: none;
  align-items: flex-end;
  gap: 2px;
  width: 20px;
  box-sizing: border-box;
  padding: 3px 0;
  border: 1px solid #aaa;
  border-radius: 4px;
  background: #f3f3f3;
  writing-mode: vertical-rl;
  font: 9px/12px "Liberation Mono", monospace;
  color: #444;
  white-space: nowrap;
}
.tab svg {
  width: 14px;
  height: 14px;
}
.status {
  display: flex;
  justify-content: flex-end;
  height: 16px;
  padding-right: 80px;
  background: #f0f0f0;
  line-height: 22px;
}
.notes {
  position: absolute;
  top: 0;
  left: 0;
  pointer-events: none;
  fill: #ff2015;
  font-size: 23px;
}
.watermark {
  position: absolute;
  right: 15px;
  bottom: 7px;
  font-size: 16px;
  line-height: 22px;
  color: #999;
  text-shadow: 0 0 1px #fff;
}
</style>
